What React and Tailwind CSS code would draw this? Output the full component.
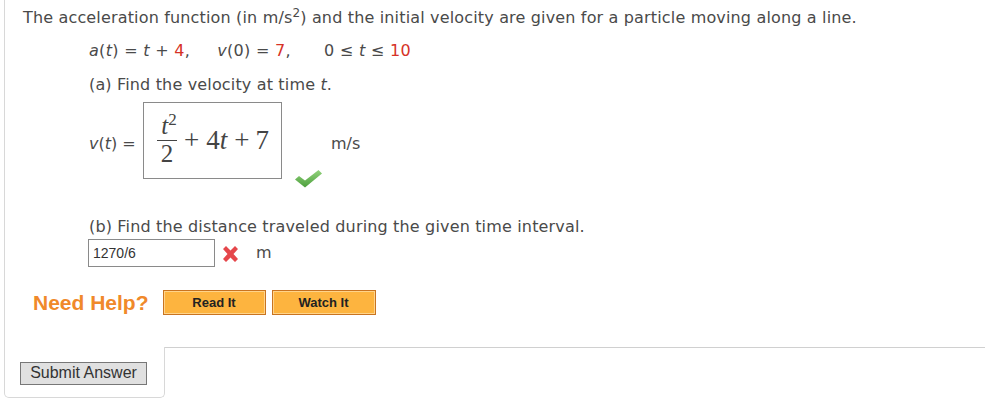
import React from 'react';

function Check() {
  return (
    <svg width="32" height="20" viewBox="0 0 32 20">
      <defs>
        <linearGradient id="cg" x1="0" y1="0" x2="0" y2="1">
          <stop offset="0" stopColor="#92d27c" />
          <stop offset="1" stopColor="#4c9f3c" />
        </linearGradient>
      </defs>
      <path d="M3 10.5 L7 7 L13 11.5 L26.5 1 L30 4.5 L13 18.5 Z" fill="url(#cg)" />
    </svg>
  );
}

function Cross() {
  return (
    <svg width="19" height="18" viewBox="0 0 19 18">
      <path d="M2 4 L5 1 L9.5 5.5 L14 1 L17 4 L12.5 9 L17 14 L14 17 L9.5 12.5 L5 17 L2 14 L6.5 9 Z" fill="#e5474b" />
    </svg>
  );
}

function Red({ children }) {
  return <span className="text-[#d63227]">{children}</span>;
}

export default function App() {
  return (
    <div className="w-[985px] h-[404px] bg-white text-[#4a4a4a] overflow-hidden font-['DejaVu_Sans',Verdana,sans-serif]">
      <div className="ml-1 border-l border-[#d8d8d8] pl-[18px] pt-[7px] h-[347px]">
        <div className="text-[16px] leading-[22px] tracking-[0.16px]">
          The acceleration function (in m/s<sup className="text-[12px] relative -top-[6px] align-baseline">2</sup>) and the initial velocity are given for a particle moving along a line.
        </div>
        <div className="pl-[66px] mt-[11px] text-[16px] leading-[22px] whitespace-pre tracking-[0.3px]">
          <i>a</i>(<i>t</i>) = <i>t</i> + <Red>4</Red>,
          <span className="ml-[27px]"><i>v</i>(0) = <Red>7</Red>,</span>
          <span className="ml-[33px]">0 ≤ <i>t</i> ≤ <Red>10</Red></span>
        </div>
        <div className="pl-[66px] mt-[12px] text-[16px] leading-[22px] tracking-[0.16px]">
          (a) Find the velocity at time <i>t</i>.
        </div>
        <div className="pl-[66px] mt-[6px] flex items-start">
          <div className="text-[16px] leading-[22px] mt-[31px] w-[54px]">
            <i>v</i>(<i>t</i>) =
          </div>
          <div className="w-[139px] h-[77px] border border-[#8a8a8a] flex items-center pl-[13px] text-[#444] [font-family:'Liberation_Serif',serif]">
            <div className="flex flex-col items-center">
              <span className="text-[25px] leading-[22px] italic pl-[4px]">t<sup className="not-italic text-[17px] relative -top-[9px] align-baseline">2</sup></span>
              <span className="w-[20px] h-px bg-[#444] mt-[3px]" />
              <span className="text-[25px] leading-[26px]">2</span>
            </div>
            <span className="text-[27px] leading-none ml-[7px]">+</span>
            <span className="text-[27px] leading-none ml-[7px]">4<i>t</i></span>
            <span className="text-[27px] leading-none ml-[7px]">+</span>
            <span className="text-[27px] leading-none ml-[6px]">7</span>
          </div>
          <div className="flex flex-col">
            <div className="text-[16px] leading-[22px] mt-[31px] ml-[49px]">m/s</div>
            <div className="ml-[10px] mt-[14px]"><Check /></div>
          </div>
        </div>
        <div className="pl-[66px] mt-[27px] text-[16px] leading-[22px] tracking-[0.16px]">
          (b) Find the distance traveled during the given time interval.
        </div>
        <div className="pl-[65px] mt-[1px] flex items-center">
          <div className="w-[127px] h-[28px] border border-[#8a8a8a] flex items-center px-[4px] text-[14px] text-[#333] font-['Liberation_Sans',sans-serif]">1270/6</div>
          <div className="ml-[6px] mt-[2px]"><Cross /></div>
          <div className="ml-[16px] text-[16px]">m</div>
        </div>
        <div className="pl-[10px] mt-[20px] flex items-center font-['Liberation_Sans',sans-serif]">
          <span className="text-[21px] font-bold text-[#f0892a] mr-[14px]">Need Help?</span>
          <button className="w-[103px] h-[25px] border border-[#c97420] bg-[#fdb43f] text-[13px] font-bold text-[#222] shadow-[inset_0_0_0_1px_#ffd48a] mr-[6px]">Read It</button>
          <button className="w-[104px] h-[25px] border border-[#c97420] bg-[#fdb43f] text-[13px] font-bold text-[#222] shadow-[inset_0_0_0_1px_#ffd48a]">Watch It</button>
        </div>
      </div>
      <div className="flex">
        <div className="ml-1 w-[161px] h-[51px] border-l border-b border-r border-[#d8d8d8] rounded-b-[5px] pl-[15px] pt-[14px]">
          <button className="w-[127px] h-[23px] border border-[#777] bg-[#e0e0e0] text-[16px] text-[#333] leading-none font-['Liberation_Sans',sans-serif]">Submit Answer</button>
        </div>
        <div className="flex-1 border-t border-[#d0d0d0]" />
      </div>
    </div>
  );
}
